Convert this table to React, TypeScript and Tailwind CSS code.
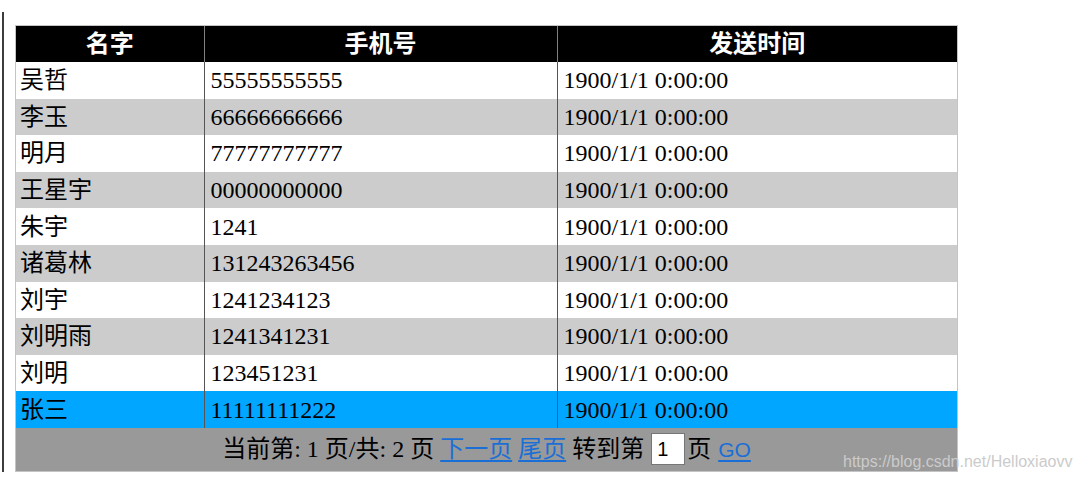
import React from "react";

interface Msg {
  name: string;
  phone: string;
  time: string;
}

const rows: Msg[] = [
  { name: "吴哲", phone: "55555555555", time: "1900/1/1 0:00:00" },
  { name: "李玉", phone: "66666666666", time: "1900/1/1 0:00:00" },
  { name: "明月", phone: "77777777777", time: "1900/1/1 0:00:00" },
  { name: "王星宇", phone: "00000000000", time: "1900/1/1 0:00:00" },
  { name: "朱宇", phone: "1241", time: "1900/1/1 0:00:00" },
  { name: "诸葛林", phone: "131243263456", time: "1900/1/1 0:00:00" },
  { name: "刘宇", phone: "1241234123", time: "1900/1/1 0:00:00" },
  { name: "刘明雨", phone: "1241341231", time: "1900/1/1 0:00:00" },
  { name: "刘明", phone: "123451231", time: "1900/1/1 0:00:00" },
  { name: "张三", phone: "11111111222", time: "1900/1/1 0:00:00" },
];

function rowBg(i: number) {
  if (i === rows.length - 1) return "bg-[#00a6ff]";
  return i % 2 === 0 ? "bg-white" : "bg-[#cccccc]";
}

export default function App() {
  return (
    <div
      className="relative w-[1083px] h-[480px] bg-white text-black"
      style={{ fontFamily: '"Liberation Serif", "Noto Sans CJK SC", serif' }}
    >
      <div className="flex">
        <div className="ml-[2px] mt-[12px] h-[460px] w-[2px] bg-[#3c3c3c]" />
        <div className="ml-[11px] mt-[25px] w-[943px] border border-[#c4c4c4]">
          <table className="w-full table-fixed border-collapse text-[24px] leading-none">
            <colgroup>
              <col className="w-[188px]" />
              <col className="w-[353px]" />
              <col />
            </colgroup>
            <thead>
              <tr className="h-[36px] bg-black text-white">
                <th className="font-bold">名字</th>
                <th className="border-l border-[#808080] font-bold">手机号</th>
                <th className="border-l border-[#808080] font-bold">发送时间</th>
              </tr>
            </thead>
            <tbody>
              {rows.map((r, i) => (
                <tr key={r.name} className={`h-[36.6px] ${rowBg(i)}`}>
                  <td className="pl-[4px]">{r.name}</td>
                  <td className="border-l border-[#555] pl-[6px]">{r.phone}</td>
                  <td className="border-l border-[#555] pl-[6px]">{r.time}</td>
                </tr>
              ))}
              <tr className="h-[43px] bg-[#999999]">
                <td colSpan={3} className="text-center">
                  <span className="inline-flex items-center">
                    当前第: 1 页/共: 2 页{" "}
                    <a href="#" className="ml-[6px] text-[#1a6fd6] underline underline-offset-[3px]">
                      下一页
                    </a>
                    <a href="#" className="ml-[6px] text-[#1a6fd6] underline underline-offset-[3px]">
                      尾页
                    </a>
                    <span className="ml-[6px]">转到第</span>
                    <input
                      readOnly
                      value="1"
                      className="ml-[7px] h-[32px] w-[34px] border border-[#767676] bg-white pl-[5px] text-[20px] text-black"
                      style={{ fontFamily: '"Liberation Sans", Arial, sans-serif' }}
                    />
                    <span className="ml-[2px]">页</span>
                    <a
                      href="#"
                      className="ml-[7px] text-[21px] text-[#1a6fd6] underline underline-offset-[3px]"
                      style={{ fontFamily: '"Liberation Sans", Arial, sans-serif' }}
                    >
                      GO
                    </a>
                  </span>
                </td>
              </tr>
            </tbody>
          </table>
        </div>
      </div>
      <div
        className="absolute left-[843px] top-[450px] text-[16px] text-[#cbcbcb]"
        style={{ fontFamily: '"Liberation Sans", Arial, sans-serif' }}
      >
        https://blog.csdn.net/Helloxiaovv
      </div>
    </div>
  );
}
